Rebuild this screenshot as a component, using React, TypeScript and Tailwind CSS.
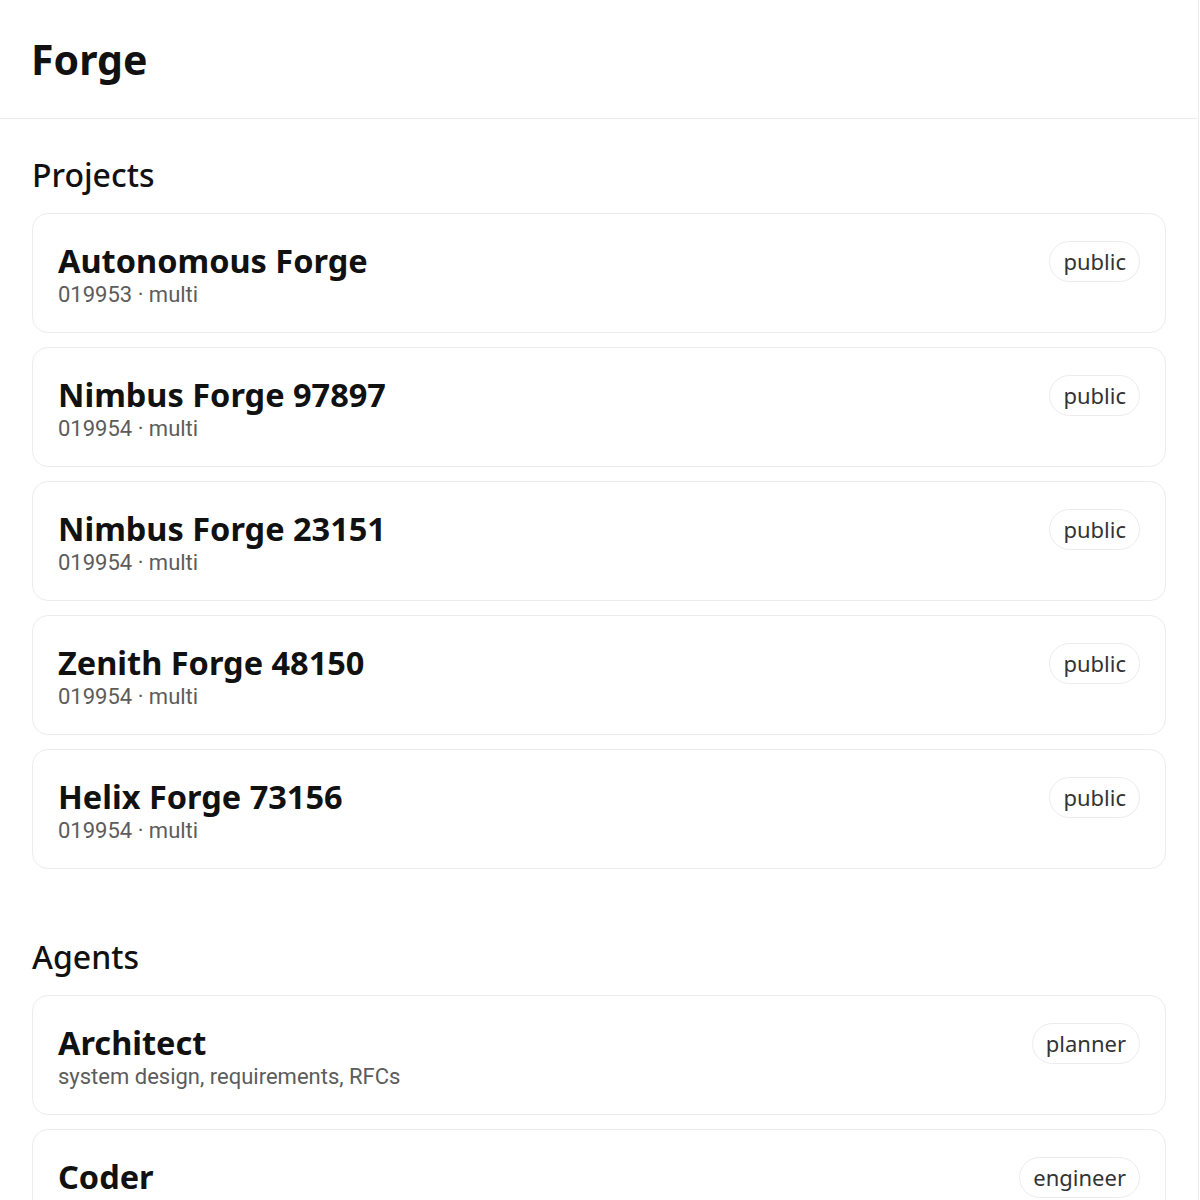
const projects = [
  { name: 'Autonomous Forge', meta: '019953 · multi', tag: 'public' },
  { name: 'Nimbus Forge 97897', meta: '019954 · multi', tag: 'public' },
  { name: 'Nimbus Forge 23151', meta: '019954 · multi', tag: 'public' },
  { name: 'Zenith Forge 48150', meta: '019954 · multi', tag: 'public' },
  { name: 'Helix Forge 73156', meta: '019954 · multi', tag: 'public' },
];

const agents = [
  { name: 'Architect', meta: 'system design, requirements, RFCs', tag: 'planner' },
  { name: 'Coder', meta: 'implementation, refactors, tests', tag: 'engineer' },
];

type Item = { name: string; meta: string; tag: string };

function Card({ item }: { item: Item }) {
  return (
    <div className="flex items-start justify-between rounded-[16px] border border-[#ececec] bg-white px-[25px] pt-[27px] pb-[23px]">
      <div className="min-w-0">
        <h3 className="text-[32.5px] font-bold leading-[40px] text-[#111111]">{item.name}</h3>
        <p className="font-['Roboto',sans-serif] text-[22px] leading-[28px] text-[#5c5c5c]">{item.meta}</p>
      </div>
      <span className="rounded-full border border-[#ececec] px-[13px] text-[22px] leading-[39px] text-[#333333]">
        {item.tag}
      </span>
    </div>
  );
}

function Section({ title, items }: { title: string; items: Item[] }) {
  return (
    <section>
      <h2 className="text-[32px] font-medium leading-[40px] text-[#111111]">{title}</h2>
      <div className="mt-[18px] flex flex-col gap-[14px]">
        {items.map((item) => (
          <Card key={item.name} item={item} />
        ))}
      </div>
    </section>
  );
}

export default function App() {
  return (
    <div className="min-h-[1200px] w-[1199px] border-r border-[#ececec] bg-white font-['Noto_Sans',sans-serif]">
      <header className="flex h-[119px] items-center border-b border-[#ececec] px-[31px]">
        <h1 className="text-[41px] font-bold leading-none text-[#111111]">Forge</h1>
      </header>
      <main className="flex flex-col gap-[68px] px-[32px] pt-[36px] pb-10">
        <Section title="Projects" items={projects} />
        <Section title="Agents" items={agents} />
      </main>
    </div>
  );
}
